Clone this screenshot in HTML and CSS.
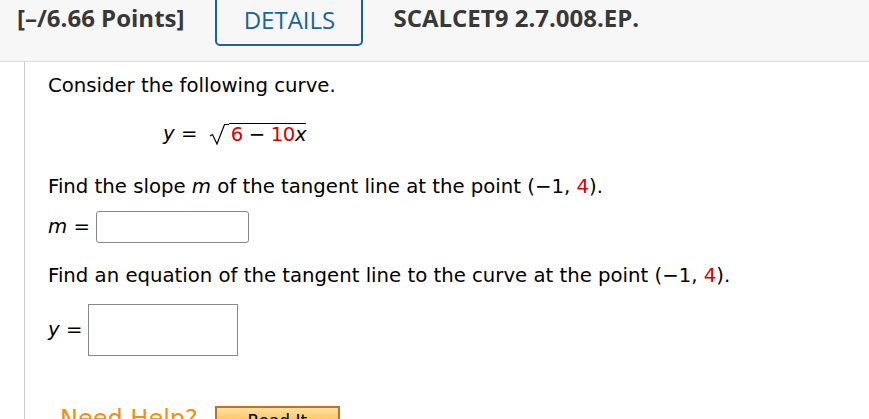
FILE: index.html
```html
<!DOCTYPE html>
<html>
<head>
<meta charset="utf-8">
<link rel="stylesheet" href="styles.css">
</head>
<body>
<div class="header">
  <span class="points">[–/6.66 Points]</span>
  <span class="details">DETAILS</span>
  <span class="code">SCALCET9 2.7.008.EP.</span>
</div>
<div class="content">
  <p class="intro">Consider the following curve.</p>
  <div class="eq">
    <i>y</i> = <svg class="rad" width="20" height="22" viewBox="0 0 20 22"><polyline points="1,13 3.5,11.5 8,21 15.5,1.5 20,1.5" fill="none" stroke="#000" stroke-width="1.2"/></svg><span class="radicand"><span class="red">6</span> − <span class="red">10</span><i>x</i></span>
  </div>
  <p class="q1">Find the slope <i>m</i> of the tangent line at the point (−1, <span class="red">4</span>).</p>
  <div class="row row-m"><i>m</i> =<span class="box box-m"></span></div>
  <p class="q2">Find an equation of the tangent line to the curve at the point (−1, <span class="red">4</span>).</p>
  <div class="row row-y"><i>y</i> =<span class="box box-y"></span></div>
  <div class="help">
    <span class="need">Need Help?</span>
    <span class="readit">Read It</span>
  </div>
</div>
</body>
</html>
```
FILE: styles.css
```css
html, body {
  margin: 0;
  padding: 0;
  background: #fff;
  overflow: hidden;
}
.header {
  height: 61px;
  background: #f7f7f7;
  border-bottom: 1px solid #dddddd;
  display: flex;
  align-items: flex-start;
  font-family: "Open Sans", sans-serif;
  font-size: 24px;
  color: #383838;
}
.points {
  font-weight: 700;
  margin-left: 17px;
  margin-top: 1px;
  line-height: 33px;
}
.details {
  margin-left: 31px;
  margin-top: -3px;
  width: 144px;
  height: 41px;
  border: 2px solid #1565a0;
  border-radius: 0 0 5px 5px;
  color: #1565a0;
  text-align: center;
  line-height: 33px;
  padding-top: 4px;
}
.code {
  font-weight: 700;
  margin-left: 30px;
  margin-top: 1px;
  line-height: 33px;
}
.content {
  margin-left: 24px;
  border-left: 1px solid #cccccc;
  padding-left: 23px;
  padding-top: 12px;
  height: 400px;
  font-family: "DejaVu Sans", Verdana, sans-serif;
  font-size: 19.7px;
  color: #000;
  line-height: 24px;
}
p { margin: 0; }
.red { color: #d80000; }
i { font-style: italic; }
.eq {
  margin-top: 24px;
  margin-left: 115px;
  display: flex;
  align-items: flex-end;
  white-space: pre;
}
.rad {
  margin-left: 5px;
  margin-bottom: 1px;
}
.radicand {
  border-top: 1px solid #000;
  padding: 0 0 0 2px;
  line-height: 22px;
  letter-spacing: -0.4px;
}
.q1 { margin-top: 29px; }
.row {
  display: flex;
  align-items: center;
  white-space: pre;
}
.row-m { margin-top: 12px; }
.box {
  display: inline-block;
  border: 1px solid #888;
  background: #fff;
  box-sizing: border-box;
}
.box-m {
  width: 153px;
  height: 32px;
  border-radius: 3px;
  margin-left: 6px;
}
.q2 { margin-top: 21px; }
.row-y { margin-top: 16px; }
.box-y {
  width: 150px;
  height: 52px;
  margin-left: 6px;
}
.help {
  margin-top: 50px;
  display: flex;
  align-items: flex-start;
  margin-left: 12px;
}
.need {
  font-family: "DejaVu Sans", Verdana, sans-serif;
  font-size: 24px;
  line-height: 24px;
  color: #f0900c;
  margin-top: 1px;
}
.readit {
  margin-left: 17px;
  width: 125px;
  height: 30px;
  border: 2px solid #b8732e;
  background: linear-gradient(#ffe0a0, #f9a826);
  box-sizing: border-box;
  text-align: center;
  font-family: "DejaVu Sans", Verdana, sans-serif;
  font-size: 17px;
  line-height: 26px;
}
```
